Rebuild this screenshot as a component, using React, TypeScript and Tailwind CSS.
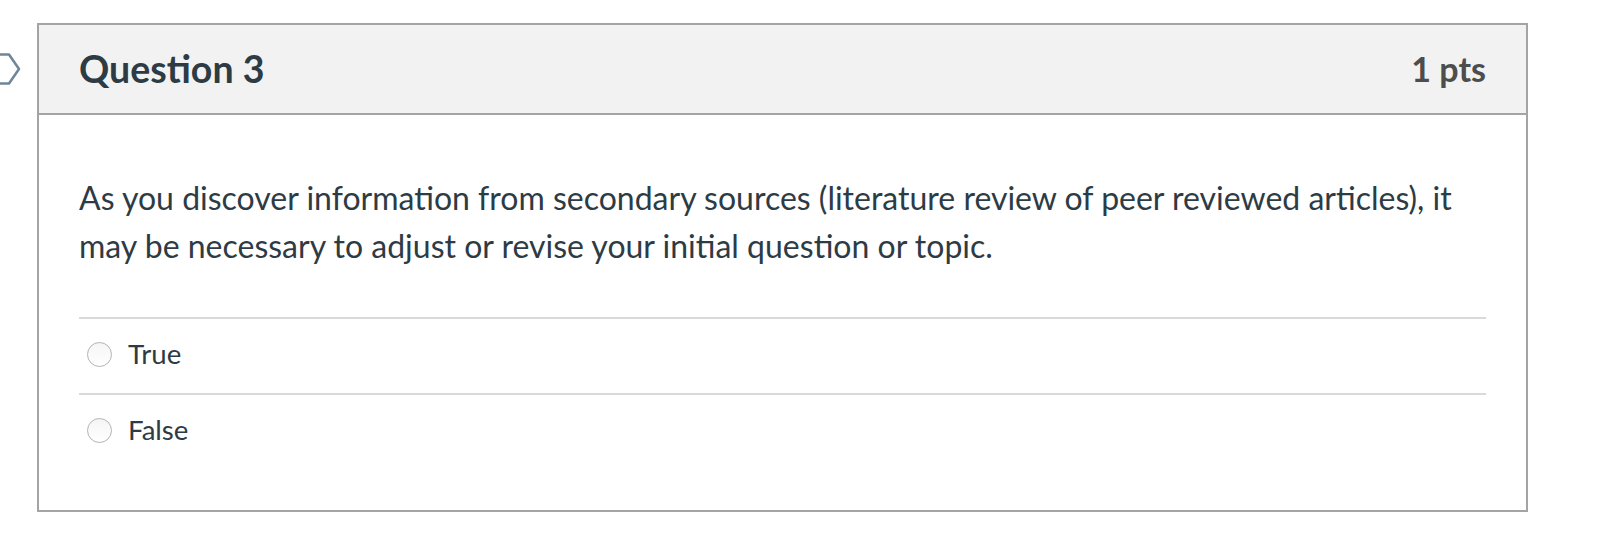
import React from "react";

const font = { fontFamily: "Lato, 'Noto Sans', sans-serif" };

function Radio() {
  return (
    <span className="inline-block w-[25px] h-[25px] rounded-full border border-[#b4b4b4] bg-gradient-to-b from-[#f5f5f5] to-white shrink-0" />
  );
}

export default function App() {
  return (
    <div className="relative w-[1622px] h-[556px] bg-white" style={font}>
      <svg className="absolute left-0 top-[53px]" width="22" height="32" viewBox="0 0 22 32">
        <path d="M-10 1.5 L9 1.5 L19 16 L9 30.5 L-10 30.5" fill="none" stroke="#6f8598" strokeWidth="2.5" strokeLinejoin="round" />
      </svg>
      <div className="pt-[23px] pl-[37px]">
        <div className="w-[1491px] border-2 border-[#a4a4a4]">
          <div className="h-[90px] bg-[#f2f2f2] border-b-2 border-[#a4a4a4] px-[40px] flex items-center justify-between">
            <span className="text-[37.5px] font-bold text-[#2d3b45] leading-none">Question 3</span>
            <span className="text-[34px] font-bold text-[#4d4d4d] leading-none">1 pts</span>
          </div>
          <div className="px-[40px] pt-[59px] pb-[41px]">
            <p className="text-[32px] leading-[48px] text-[#2d3b45]">
              As you discover information from secondary sources (literature review of peer reviewed articles), it may be necessary to adjust or revise your initial question or topic.
            </p>
            <div className="mt-[47px]">
              <div className="h-[76px] pb-[4px] border-t-2 border-[#d9d9d9] flex items-center gap-[16px] pl-[8px]">
                <Radio />
                <span className="text-[27.6px] text-[#2d3b45]">True</span>
              </div>
              <div className="h-[76px] pb-[4px] border-t-2 border-[#d9d9d9] flex items-center gap-[16px] pl-[8px]">
                <Radio />
                <span className="text-[27.6px] text-[#2d3b45]">False</span>
              </div>
            </div>
          </div>
        </div>
      </div>
    </div>
  );
}
